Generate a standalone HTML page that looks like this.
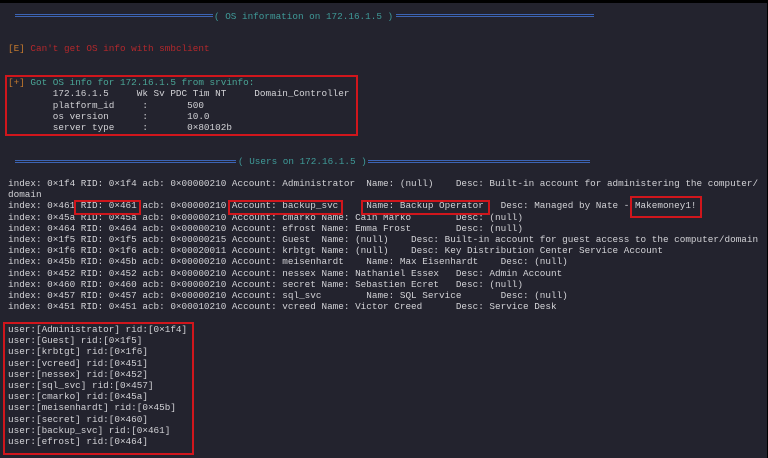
<!DOCTYPE html>
<html><head><meta charset="utf-8"><style>
html,body{margin:0;padding:0}
body{width:768px;height:458px;background:#000;position:relative;overflow:hidden}
#t{position:absolute;left:0;top:3px;width:767px;height:455px;background:#23232e}
.l{position:absolute;left:8px;font-family:"Liberation Mono",monospace;font-size:9.33px;line-height:11px;white-space:pre;color:#d2d2d6}
.bar{position:absolute;height:1px;border-top:1px solid #3c64b4;border-bottom:1px solid #3c64b4}
.h{color:#3f9a98}
.o{color:#c67a2e}.r{color:#b3282c}.g{color:#4aa596}
.box{position:absolute;border:2px solid #d0161c}
</style></head><body><div id="t"></div>
<div class="bar" style="left:15px;top:14px;width:198px"></div>
<div class="l h" style="left:214px;top:11px">( OS information on 172.16.1.5 )</div>
<div class="bar" style="left:396px;top:14px;width:198px"></div>
<div class="l" style="top:43px"><span class="o">[E]</span> <span class="r">Can't get OS info with smbclient</span></div>
<div class="l" style="top:77px"><span class="o">[+]</span> <span class="g">Got OS info for 172.16.1.5 from srvinfo:</span></div>
<div class="l" style="top:88px">        172.16.1.5     Wk Sv PDC Tim NT     Domain_Controller</div>
<div class="l" style="top:99.5px">        platform_id     :       500</div>
<div class="l" style="top:111px">        os version      :       10.0</div>
<div class="l" style="top:122px">        server type     :       0×80102b</div>
<div class="box" style="left:5px;top:75px;width:349px;height:57px"></div>
<div class="bar" style="left:15px;top:160px;width:221px"></div>
<div class="l h" style="left:238px;top:156px">( Users on 172.16.1.5 )</div>
<div class="bar" style="left:368px;top:160px;width:222px"></div>
<div class="l" style="top:178px">index: 0×1f4 RID: 0×1f4 acb: 0×00000210 Account: Administrator  Name: (null)    Desc: Built-in account for administering the computer/</div>
<div class="l" style="top:189.2px">domain</div>
<div class="l" style="top:200.4px">index: 0×461 RID: 0×461 acb: 0×00000210 Account: backup_svc     Name: Backup Operator   Desc: Managed by Nate - Makemoney1!</div>
<div class="l" style="top:211.6px">index: 0×45a RID: 0×45a acb: 0×00000210 Account: cmarko Name: Cain Marko        Desc: (null)</div>
<div class="l" style="top:222.8px">index: 0×464 RID: 0×464 acb: 0×00000210 Account: efrost Name: Emma Frost        Desc: (null)</div>
<div class="l" style="top:234px">index: 0×1f5 RID: 0×1f5 acb: 0×00000215 Account: Guest  Name: (null)    Desc: Built-in account for guest access to the computer/domain</div>
<div class="l" style="top:245.2px">index: 0×1f6 RID: 0×1f6 acb: 0×00020011 Account: krbtgt Name: (null)    Desc: Key Distribution Center Service Account</div>
<div class="l" style="top:256.4px">index: 0×45b RID: 0×45b acb: 0×00000210 Account: meisenhardt    Name: Max Eisenhardt    Desc: (null)</div>
<div class="l" style="top:267.6px">index: 0×452 RID: 0×452 acb: 0×00000210 Account: nessex Name: Nathaniel Essex   Desc: Admin Account</div>
<div class="l" style="top:278.8px">index: 0×460 RID: 0×460 acb: 0×00000210 Account: secret Name: Sebastien Ecret   Desc: (null)</div>
<div class="l" style="top:290px">index: 0×457 RID: 0×457 acb: 0×00000210 Account: sql_svc        Name: SQL Service       Desc: (null)</div>
<div class="l" style="top:301.2px">index: 0×451 RID: 0×451 acb: 0×00010210 Account: vcreed Name: Victor Creed      Desc: Service Desk</div>
<div class="box" style="left:74px;top:200px;width:63px;height:11px"></div>
<div class="box" style="left:228px;top:200px;width:111px;height:11px"></div>
<div class="box" style="left:361px;top:200px;width:125px;height:11px"></div>
<div class="box" style="left:630px;top:196px;width:68px;height:18px"></div>
<div class="l" style="top:324px;line-height:11.2px">user:[Administrator] rid:[0×1f4]
user:[Guest] rid:[0×1f5]
user:[krbtgt] rid:[0×1f6]
user:[vcreed] rid:[0×451]
user:[nessex] rid:[0×452]
user:[sql_svc] rid:[0×457]
user:[cmarko] rid:[0×45a]
user:[meisenhardt] rid:[0×45b]
user:[secret] rid:[0×460]
user:[backup_svc] rid:[0×461]
user:[efrost] rid:[0×464]</div>
<div class="box" style="left:3px;top:322px;width:187px;height:129px"></div>
</body></html>
